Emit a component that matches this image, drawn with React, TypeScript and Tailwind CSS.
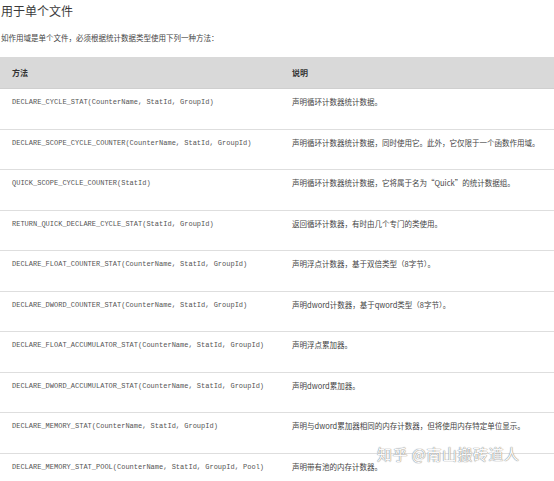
import React from "react";

const rows: [string, string][] = [
  ["DECLARE_CYCLE_STAT(CounterName, StatId, GroupId)", "声明循环计数器统计数据。"],
  ["DECLARE_SCOPE_CYCLE_COUNTER(CounterName, StatId, GroupId)", "声明循环计数器统计数据，同时使用它。此外，它仅限于一个函数作用域。"],
  ["QUICK_SCOPE_CYCLE_COUNTER(StatId)", "声明循环计数器统计数据，它将属于名为“Quick”的统计数据组。"],
  ["RETURN_QUICK_DECLARE_CYCLE_STAT(StatId, GroupId)", "返回循环计数器，有时由几个专门的类使用。"],
  ["DECLARE_FLOAT_COUNTER_STAT(CounterName, StatId, GroupId)", "声明浮点计数器，基于双倍类型（8字节）。"],
  ["DECLARE_DWORD_COUNTER_STAT(CounterName, StatId, GroupId)", "声明dword计数器，基于qword类型（8字节）。"],
  ["DECLARE_FLOAT_ACCUMULATOR_STAT(CounterName, StatId, GroupId)", "声明浮点累加器。"],
  ["DECLARE_DWORD_ACCUMULATOR_STAT(CounterName, StatId, GroupId)", "声明dword累加器。"],
  ["DECLARE_MEMORY_STAT(CounterName, StatId, GroupId)", "声明与dword累加器相同的内存计数器，但将使用内存特定单位显示。"],
  ["DECLARE_MEMORY_STAT_POOL(CounterName, StatId, GroupId, Pool)", "声明带有池的内存计数器。"],
];

export default function App() {
  return (
    <div className="relative w-[554px] h-[481px] overflow-hidden bg-white font-[family-name:'Noto_Sans_CJK_SC','Noto_Sans',sans-serif]">
      <div className="pl-[1px] pt-[3px] text-[12px] leading-[16px] text-[#3a3a3a]">用于单个文件</div>
      <div className="pl-[1px] mt-[14px] text-[7.5px] leading-[10px] text-[#444]">
        如作用域是单个文件，必须根据统计数据类型使用下列一种方法：
      </div>
      <div className="mt-[14px] grid grid-cols-[280px_1fr] h-[32px] bg-[#d9d9d9] border-b border-[#cfcfcf] items-center text-[8px] font-bold text-[#333]">
        <div className="px-3">方法</div>
        <div className="px-3">说明</div>
      </div>
      <div className="divide-y divide-[#dedede]">
        {rows.map(([a, b], i) => (
          <div key={i} className="grid grid-cols-[280px_1fr] h-[40.5px] pt-[8px]">
            <div className="px-3 font-[family-name:'Liberation_Mono',monospace] text-[7px] leading-[10px] text-[#555] whitespace-nowrap">
              {a}
            </div>
            <div className="px-3 text-[7.5px] leading-[10px] text-[#444] whitespace-nowrap">{b}</div>
          </div>
        ))}
      </div>
      <div className="absolute left-[377px] top-[445px] text-[15px] leading-[18px] text-[#fafafa] [text-shadow:0_0_1px_#777,0_0_1px_#999] tracking-[0.5px]">
        知乎 @南山搬砖道人
      </div>
    </div>
  );
}
